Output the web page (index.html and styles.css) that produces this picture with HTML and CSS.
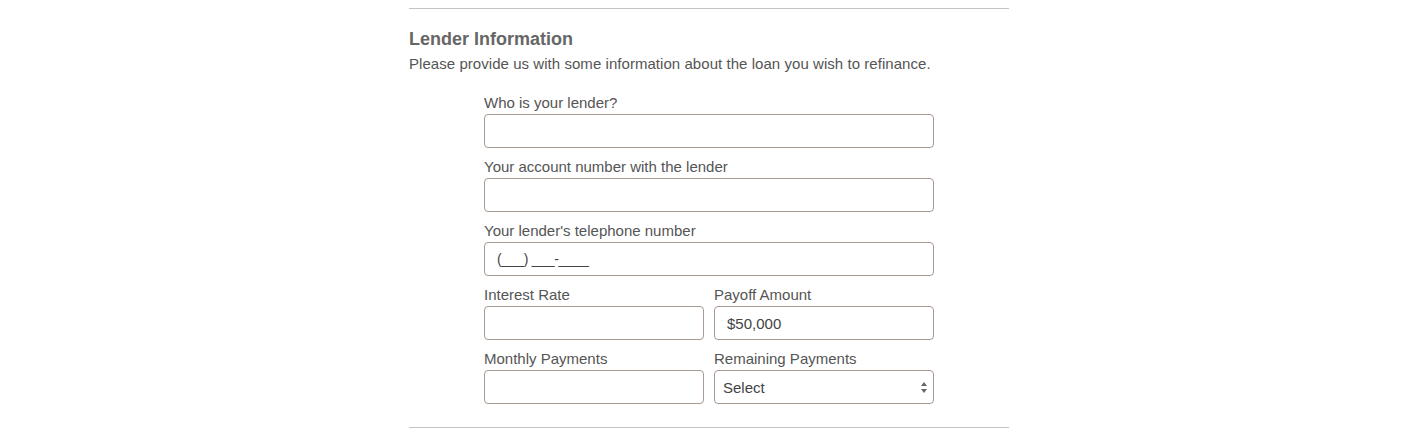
FILE: index.html
```html
<!DOCTYPE html>
<html>
<head>
<meta charset="utf-8">
<link rel="stylesheet" href="styles.css">
</head>
<body>
<div class="page">
  <hr class="rule">
  <h2 class="title">Lender Information</h2>
  <p class="intro">Please provide us with some information about the loan you wish to refinance.</p>
  <form class="form">
    <div class="field">
      <label class="label">Who is your lender?</label>
      <input class="input" type="text">
    </div>
    <div class="field">
      <label class="label">Your account number with the lender</label>
      <input class="input" type="text">
    </div>
    <div class="field">
      <label class="label">Your lender's telephone number</label>
      <input class="input phone" type="text" value="(___) ___-____">
    </div>
    <div class="row">
      <div class="field">
        <label class="label">Interest Rate</label>
        <input class="input" type="text">
      </div>
      <div class="field">
        <label class="label">Payoff Amount</label>
        <input class="input" type="text" value="$50,000">
      </div>
    </div>
    <div class="row">
      <div class="field">
        <label class="label">Monthly Payments</label>
        <input class="input" type="text">
      </div>
      <div class="field">
        <label class="label">Remaining Payments</label>
        <div class="select-wrap">
          <select class="input select">
            <option>Select</option>
          </select>
          <span class="arrows"></span>
        </div>
      </div>
    </div>
  </form>
  <hr class="rule rule-bottom">
</div>
</body>
</html>
```

FILE: styles.css
```css
* { box-sizing: border-box; }
html, body { margin: 0; padding: 0; background: #fff; }
body {
  padding-top: 8px;
  font-family: "Liberation Sans", Arial, sans-serif;
  color: #555;
}
.page {
  width: 600px;
  margin-left: 409px;
}
.rule {
  border: 0;
  height: 1px;
  background: #c4c4c4;
  margin: 0;
}
.rule-bottom { margin-top: 23px; }
.title {
  margin: 18px 0 3px;
  font-size: 18px;
  line-height: 24px;
  font-weight: bold;
  color: #666;
}
.intro {
  margin: 0;
  font-size: 15px;
  letter-spacing: 0.05px;
  line-height: 20px;
  color: #555;
}
.form {
  width: 450px;
  margin: 18px auto 0;
  display: flex;
  flex-direction: column;
  gap: 8px;
}
.field {
  display: flex;
  flex-direction: column;
  flex: 1;
  min-width: 0;
}
.label {
  font-size: 15px;
  line-height: 20px;
  padding-top: 1px;
  margin-bottom: 1px;
  color: #555;
}
.row {
  display: flex;
  gap: 10px;
}
.input {
  display: block;
  width: 100%;
  height: 34px;
  border: 1px solid #a99b91;
  border-radius: 4px;
  padding: 0 12px;
  font-family: "Liberation Sans", Arial, sans-serif;
  font-size: 15px;
  color: #444;
  background: #fff;
  outline: none;
}
.phone { font-size: 14px; letter-spacing: -0.3px; }
.select-wrap { position: relative; }
.select {
  -webkit-appearance: none;
  appearance: none;
  padding: 0 8px;
}
.arrows {
  position: absolute;
  right: 7px;
  top: 12px;
  width: 6px;
  height: 11px;
  pointer-events: none;
}
.arrows::before, .arrows::after {
  content: "";
  position: absolute;
  left: 0;
  border-left: 3px solid transparent;
  border-right: 3px solid transparent;
}
.arrows::before { top: 0; border-bottom: 4.5px solid #666; }
.arrows::after { bottom: 0; border-top: 4.5px solid #666; }
```
